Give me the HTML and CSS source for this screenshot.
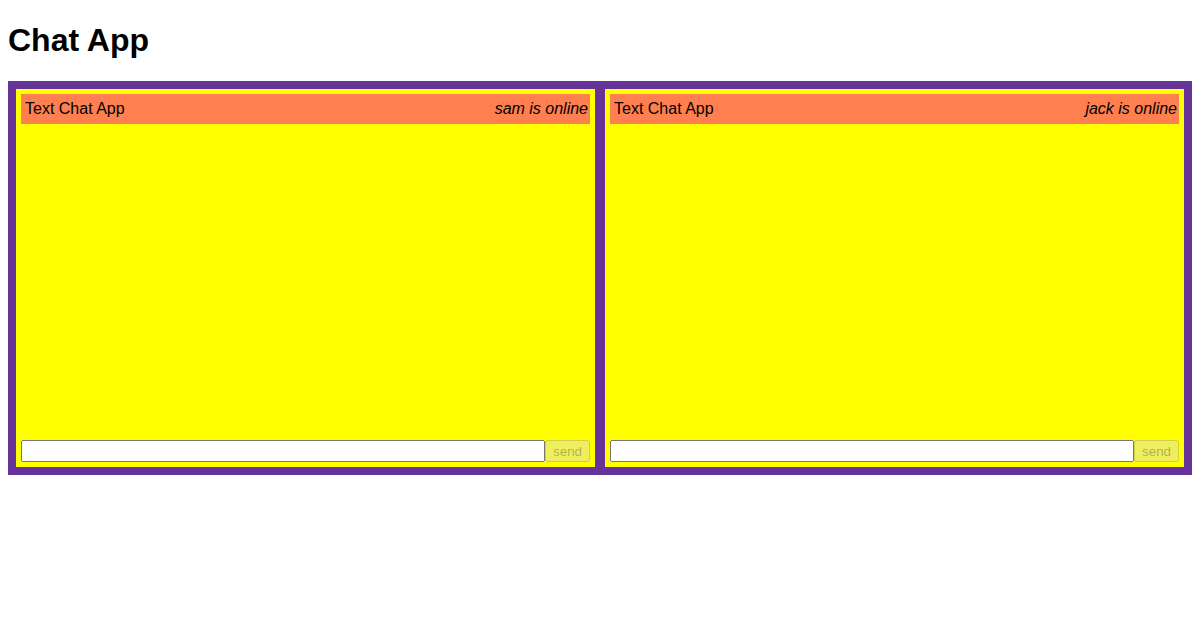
FILE: index.html
```html
<!DOCTYPE html>
<html>
<head>
<meta charset="utf-8">
<link rel="stylesheet" href="styles.css">
</head>
<body>
<h1 class="title">Chat App</h1>
<div class="apps">
  <div class="chat">
    <div class="chat-header">
      <span class="chat-name">Text Chat App</span>
      <span class="chat-status">sam is online</span>
    </div>
    <div class="chat-messages"></div>
    <form class="chat-form">
      <input class="chat-input" type="text">
      <button class="chat-send" type="button" disabled>send</button>
    </form>
  </div>
  <div class="chat">
    <div class="chat-header">
      <span class="chat-name">Text Chat App</span>
      <span class="chat-status">jack is online</span>
    </div>
    <div class="chat-messages"></div>
    <form class="chat-form">
      <input class="chat-input" type="text">
      <button class="chat-send" type="button" disabled>send</button>
    </form>
  </div>
</div>
</body>
</html>
```
FILE: styles.css
```css
body {
  margin: 8px;
  font-family: "Liberation Sans", Arial, sans-serif;
  background: #ffffff;
  color: #000000;
}

.title {
  font-size: 32px;
  font-weight: bold;
  margin: 14px 0 22.2px;
}

.apps {
  display: flex;
  background: #663399;
  padding: 3px;
}

.chat {
  flex: 1 1 0;
  margin: 5px;
  background: #ffff00;
  padding: 5px;
  height: 368px;
  display: flex;
  flex-direction: column;
}

.chat-header {
  display: flex;
  justify-content: space-between;
  align-items: center;
  height: 30px;
  padding: 0 2px 0 4px;
  background: #ff7f50;
  font-size: 16px;
}

.chat-status {
  font-style: italic;
}

.chat-messages {
  flex: 1;
}

.chat-form {
  display: flex;
  margin: 0;
}

.chat-input {
  flex: 1;
  min-width: 0;
  margin: 0;
  box-sizing: border-box;
  height: 22px;
  font-family: "Liberation Sans", Arial, sans-serif;
  font-size: 13.33px;
}

.chat-send {
  margin: 0;
  font-family: "Liberation Sans", Arial, sans-serif;
  font-size: 13.33px;
}
```
